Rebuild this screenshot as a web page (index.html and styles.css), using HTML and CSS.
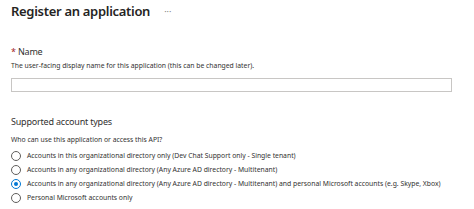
FILE: index.html
```html
<!DOCTYPE html>
<html><head>
<title>Register an application</title>
<link rel="stylesheet" href="styles.css">
<meta http-equiv="content-type" content="text/html; charset=UTF-8">
</head>
<body>
<div class="page">

<div class="header">
  <h1>Register an application</h1>
  <span class="more">&middot;&middot;&middot;</span>
</div>

<div class="field">
  <label class="label"><span class="req">*</span> Name</label>
  <div class="help">The user-facing display name for this application (this can be changed later).</div>
  <input class="textbox" type="text">
</div>

<h2>Supported account types</h2>
<div class="help question">Who can use this application or access this API?</div>

<div class="choices">
  <label class="choice"><span class="radio"></span>Accounts in this organizational directory only (Dev Chat Support only - Single tenant)</label>
  <label class="choice"><span class="radio"></span>Accounts in any organizational directory (Any Azure AD directory - Multitenant)</label>
  <label class="choice"><span class="radio on"></span>Accounts in any organizational directory (Any Azure AD directory - Multitenant) and personal Microsoft accounts (e.g. Skype, Xbox)</label>
  <label class="choice"><span class="radio"></span>Personal Microsoft accounts only</label>
</div>

</div>
</body></html>
```

FILE: styles.css
```css
body {
  margin: 0;
  font-family: "Noto Sans", "Open Sans", sans-serif;
  color: #323130;
  background: #fff;
}

.page { padding: 0 22px 0 11px; }

.header { display: flex; align-items: center; height: 22px; }
.header h1 {
  margin: 0;
  font-size: 13px;
  letter-spacing: -0.3px;
  font-weight: 600;
  color: #252423;
}
.more { margin-left: 14px; font-size: 9px; color: #8a8886; }

.field { margin-top: 23px; }
.label { display: block; font-size: 9px; letter-spacing: -0.2px; line-height: 13px; }
.req { color: #a4262c; }

.help { font-size: 6.8px; line-height: 10px; margin-top: 3px; white-space: nowrap; }
.question { margin-top: 6px; }

.textbox {
  display: block;
  box-sizing: border-box;
  width: 100%;
  height: 14px;
  margin: 7px 0 0;
  border: 1px solid #c8c6c4;
  padding: 0;
}

h2 {
  margin: 23px 0 0;
  font-size: 9px;
  font-weight: 400;
  letter-spacing: -0.2px;
  line-height: 14px;
}

.choices { display: flex; flex-direction: column; gap: 4px; margin-top: 6px; }
.choice { display: flex; align-items: center; font-size: 6.8px; line-height: 10px; white-space: nowrap; }
.radio {
  box-sizing: border-box;
  flex: none;
  width: 10px;
  height: 10px;
  border: 1px solid #605e5c;
  border-radius: 50%;
  margin-right: 6px;
  position: relative;
}
.radio.on { border-color: #0078d4; }
.radio.on::after {
  content: "";
  position: absolute;
  left: 2px; top: 2px;
  width: 4px; height: 4px;
  border-radius: 50%;
  background: #0078d4;
}
```
